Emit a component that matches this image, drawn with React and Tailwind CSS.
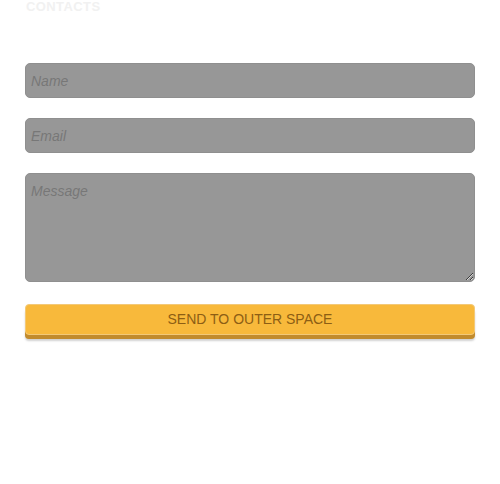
import React from 'react';

function App() {
  return (
    <div className="min-h-screen bg-white font-['Liberation_Sans',Arial,sans-serif]">
      <section className="px-[25px]">
        {/* section heading, nearly white on white */}
        <h2 className="text-[13px] leading-[13px] font-bold uppercase tracking-[0.4px] text-[#f1f1f1] pl-px">
          Contacts
        </h2>

        <form className="mt-[50px] flex flex-col" onSubmit={(e) => e.preventDefault()}>
          <input
            type="text"
            placeholder="Name"
            className="h-[35px] w-full rounded-[5px] border border-[#8f8f8f] bg-[#979797] px-[5px] text-[14px] italic text-[#555] placeholder:text-[#777] outline-none"
          />
          <input
            type="email"
            placeholder="Email"
            className="mt-[20px] h-[35px] w-full rounded-[5px] border border-[#8f8f8f] bg-[#979797] px-[5px] text-[14px] italic text-[#555] placeholder:text-[#777] outline-none"
          />
          <textarea
            placeholder="Message"
            className="mt-[20px] h-[109px] w-full rounded-[5px] border border-[#8f8f8f] bg-[#979797] px-[5px] pt-[7px] text-[14px] italic text-[#555] placeholder:text-[#777] outline-none"
          />
          <button
            type="submit"
            className="mt-[22px] h-[31px] w-full rounded-[4px] border border-[#f3c978] bg-[#f8b93b] text-[14px] uppercase text-[#8d5e14] shadow-[0_4px_0_#c28b2c,0_6px_2px_rgba(0,0,0,0.18)]"
          >
            Send to outer space
          </button>
        </form>
      </section>
    </div>
  );
}

export default App;
